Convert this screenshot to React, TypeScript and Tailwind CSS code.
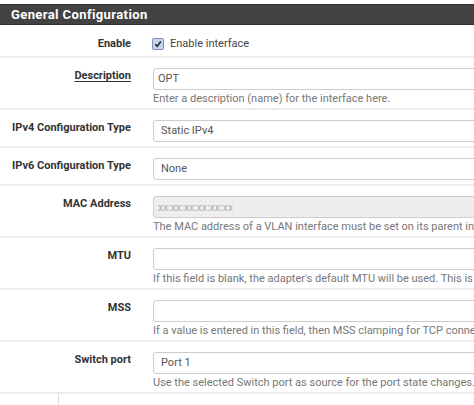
import React from "react";

type Row = {
  label: string;
  kind: "check" | "input" | "select" | "disabled";
  value?: string;
  help?: string;
  underline?: boolean;
};

const rows: Row[] = [
  { label: "Enable", kind: "check", value: "Enable interface" },
  {
    label: "Description",
    kind: "input",
    value: "OPT",
    underline: true,
    help: "Enter a description (name) for the interface here.",
  },
  { label: "IPv4 Configuration Type", kind: "select", value: "Static IPv4" },
  { label: "IPv6 Configuration Type", kind: "select", value: "None" },
  {
    label: "MAC Address",
    kind: "disabled",
    value: "xx:xx:xx:xx:xx:xx",
    help: "The MAC address of a VLAN interface must be set on its parent interface",
  },
  {
    label: "MTU",
    kind: "input",
    value: "",
    help: "If this field is blank, the adapter's default MTU will be used. This is typically 1500 bytes",
  },
  {
    label: "MSS",
    kind: "input",
    value: "",
    help: "If a value is entered in this field, then MSS clamping for TCP connections",
  },
  {
    label: "Switch port",
    kind: "select",
    value: "Port 1",
    help: "Use the selected Switch port as source for the port state changes.",
  },
];

function Field({ row }: { row: Row }) {
  if (row.kind === "check") {
    return (
      <div className="flex items-center h-[16px] gap-[6px]">
        <span className="ml-[-1px] flex items-center justify-center w-[12px] h-[12px] border border-[#7b8fb8] bg-[#c9d4ea] rounded-[2px]">
          <svg width="8" height="8" viewBox="0 0 8 8">
            <path d="M1.2 4.2 L3.2 6.2 L6.8 1.6" fill="none" stroke="#1e2433" strokeWidth="1.6" />
          </svg>
        </span>
        <span className="text-[11px] text-[#444]">{row.value}</span>
      </div>
    );
  }
  const base =
    "h-[22px] w-full rounded-[3px] border border-[#ccc] flex items-center text-[11px] text-[#555]";
  if (row.kind === "disabled") {
    return (
      <div className={`${base} bg-[#eee] px-[4px]`}>
        <span className="text-[10px] text-[#aaa] tracking-[0.2px]">{row.value}</span>
      </div>
    );
  }
  return (
    <div className={`${base} bg-white ${row.kind === "select" ? "px-[7px]" : "px-[4px]"}`}>
      {row.value}
    </div>
  );
}

export default function App() {
  return (
    <div className="w-[474px] h-[405px] overflow-hidden bg-white font-['Roboto',sans-serif]">
      <div className="w-[720px]">
        <div className="mt-[4px] h-[21px] bg-[#424242] border-y border-[#2e2e2e] flex items-center pl-[11px]">
          <span className="text-white font-bold text-[13px] tracking-[0.4px]">General Configuration</span>
        </div>
        {rows.map((row) => {
          const top = row.kind === "check" ? "pt-[11px]" : "pt-[10px]";
          return (
            <div key={row.label} className="flex border-b-2 border-[#ececec]">
              <div className={`w-[131px] shrink-0 text-right ${top}`}>
                <span
                  className={`block leading-[16px] text-[11px] font-bold text-[#333] ${
                    row.underline ? "underline underline-offset-2" : ""
                  }`}
                >
                  {row.label}
                </span>
              </div>
              <div className={`ml-[22px] flex-1 ${top} ${row.help ? "pb-[2px]" : "pb-[4px]"}`}>
                <Field row={row} />
                {row.help && (
                  <div className="mt-[2px] leading-[14px] text-[11px] text-[#777] whitespace-nowrap">
                    {row.help}
                  </div>
                )}
              </div>
            </div>
          );
        })}
        <div className="ml-[58px] h-[20px] border-l border-[#ddd]" />
      </div>
    </div>
  );
}
